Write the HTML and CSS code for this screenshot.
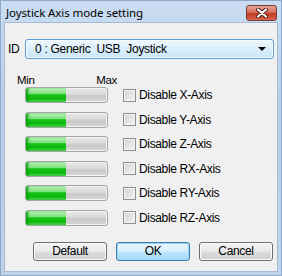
FILE: index.html
```html
<!DOCTYPE html>
<html lang="en">

<head>
    <meta charset="UTF-8">
    <title>Joystick Axis mode setting</title>
    <link rel="stylesheet" href="styles.css">
</head>

<body>
    <div class="window">
        <div class="titlebar">
            <span class="title">Joystick Axis mode setting</span>
            <div class="close">
                <svg width="14" height="10" viewBox="0 0 14 10">
                    <path d="M3 1.5 L11 8.5 M11 1.5 L3 8.5" stroke="#4a1a12" stroke-width="4" stroke-linecap="round" />
                    <path d="M3 1.5 L11 8.5 M11 1.5 L3 8.5" stroke="#fff" stroke-width="2.2" stroke-linecap="round" />
                </svg>
            </div>
        </div>
        <div class="client">
            <div class="id-row">
                <span class="id-label">ID</span>
                <div class="combo">
                    <span class="combo-text">0 : Generic  USB  Joystick</span>
                    <span class="arrow"></span>
                </div>
            </div>
            <div class="minmax">
                <span>Min</span>
                <span>Max</span>
            </div>
            <div class="axes">
                <div class="axis">
                    <div class="bar"><div class="fill"></div></div>
                    <span class="check"></span>
                    <span class="label">Disable X-Axis</span>
                </div>
                <div class="axis">
                    <div class="bar"><div class="fill"></div></div>
                    <span class="check"></span>
                    <span class="label">Disable Y-Axis</span>
                </div>
                <div class="axis">
                    <div class="bar"><div class="fill"></div></div>
                    <span class="check"></span>
                    <span class="label">Disable Z-Axis</span>
                </div>
                <div class="axis">
                    <div class="bar"><div class="fill"></div></div>
                    <span class="check"></span>
                    <span class="label">Disable RX-Axis</span>
                </div>
                <div class="axis">
                    <div class="bar"><div class="fill"></div></div>
                    <span class="check"></span>
                    <span class="label">Disable RY-Axis</span>
                </div>
                <div class="axis">
                    <div class="bar"><div class="fill"></div></div>
                    <span class="check"></span>
                    <span class="label">Disable RZ-Axis</span>
                </div>
            </div>
            <div class="buttons">
                <div class="btn">Default</div>
                <div class="btn ok">OK</div>
                <div class="btn">Cancel</div>
            </div>
        </div>
    </div>
</body>

</html>
```

FILE: styles.css
```css
* {
    margin: 0;
    padding: 0;
    box-sizing: border-box;
}

body {
    width: 282px;
    height: 276px;
    overflow: hidden;
    font-family: "Liberation Sans", Arial, sans-serif;
    font-size: 12px;
    letter-spacing: -0.35px;
    color: #000;
}

.window {
    width: 282px;
    height: 276px;
    background: linear-gradient(to bottom, #c9dcf1, #b8cfe9 40%, #bfd4ec);
    border: 1px solid #8ea9c9;
    display: flex;
    flex-direction: column;
}

.titlebar {
    height: 21px;
    display: flex;
    align-items: center;
    justify-content: space-between;
    padding: 0 4px 0 5px;
}

.title {
    font-family: "Noto Sans", "Open Sans", sans-serif;
    font-size: 11.5px;
    letter-spacing: -0.1px;
    color: #000;
    margin-top: 2px;
}

.close {
    width: 31px;
    height: 16px;
    margin-top: 2px;
    border: 1px solid #7a3b30;
    border-radius: 3px;
    background: linear-gradient(to bottom, #e8a395, #d6705d 45%, #c43b22 55%, #d4634b);
    display: flex;
    align-items: center;
    justify-content: center;
}

.client {
    flex: 1;
    margin: 0 3px 3px 3px;
    background: #f0f0f0;
    border: 1px solid #a7b9d3;
    padding: 16px 0 0 0;
}

.id-row {
    display: flex;
    align-items: center;
    padding-left: 3px;
}

.id-label {
    width: 17px;
}

.combo {
    width: 249px;
    height: 20px;
    border: 1px solid #5a9bd8;
    border-radius: 3px;
    background: linear-gradient(to bottom, #eef7fd, #dcefFB 50%, #c9e6f9);
    display: flex;
    align-items: center;
    justify-content: space-between;
    padding: 0 7px 0 9px;
    box-shadow: inset 0 0 0 1px #f6fbff;
}

.combo-text {
    white-space: pre;
    letter-spacing: -0.3px;
}

.arrow {
    width: 0;
    height: 0;
    border-left: 4px solid transparent;
    border-right: 4px solid transparent;
    border-top: 4px solid #000;
}

.minmax {
    display: flex;
    justify-content: space-between;
    width: 100px;
    margin: 15px 0 0 12px;
    font-size: 11.5px;
    line-height: 12px;
}

.axes {
    display: flex;
    flex-direction: column;
    gap: 8.5px;
    margin: 1px 0 0 20px;
}

.axis {
    display: flex;
    align-items: center;
    height: 16px;
}

.bar {
    width: 83px;
    height: 16px;
    border: 1px solid #a5a5a5;
    border-radius: 3px;
    background: linear-gradient(to bottom, #e9e9e9, #dadada 45%, #c9c9c9 55%, #d6d6d6);
    overflow: hidden;
    box-shadow: inset 0 0 0 1px #f4f4f4;
}

.fill {
    width: 40px;
    height: 100%;
    background: linear-gradient(to bottom, #b9f2b9, #7ee07e 40%, #17c417 48%, #0cb80c 75%, #4fd54f);
    box-shadow: inset 3px 0 3px -1px #06a006;
}

.check {
    width: 13px;
    height: 13px;
    margin: 0 3px 0 15px;
    border: 1px solid #8e8f8f;
    background: linear-gradient(135deg, #d2d2d2, #f4f4f4);
    box-shadow: inset 0 0 0 1px #f4f4f4;
}

.buttons {
    display: flex;
    gap: 9px;
    margin: 16px 0 0 28px;
}

.btn {
    width: 74px;
    height: 19px;
    border: 1px solid #707070;
    border-radius: 3px;
    background: linear-gradient(to bottom, #f2f2f2, #ebebeb 48%, #dddddd 52%, #cfcfcf);
    box-shadow: inset 0 0 0 1px #fbfbfb;
    display: flex;
    align-items: center;
    justify-content: center;
}

.btn.ok {
    border-color: #3c7fb1;
    background: linear-gradient(to bottom, #eaf6fd, #d9f0fc 48%, #bee6fd 52%, #a7d9f5);
    box-shadow: inset 0 0 0 1px #97d6f4;
}
```
